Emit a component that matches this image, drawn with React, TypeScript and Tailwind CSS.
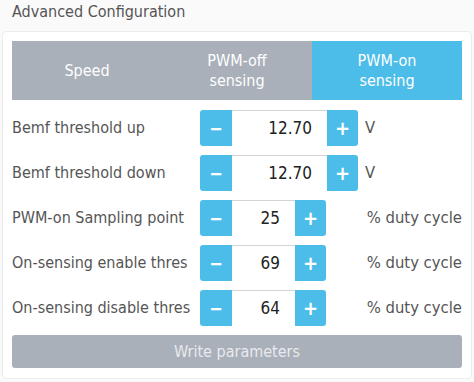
import { useState } from "react";

type Param = {
  label: string;
  value: string;
  unit: string;
  wide: boolean;
};

const params: Param[] = [
  { label: "Bemf threshold up", value: "12.70", unit: "V", wide: true },
  { label: "Bemf threshold down", value: "12.70", unit: "V", wide: true },
  { label: "PWM-on Sampling point", value: "25", unit: "% duty cycle", wide: false },
  { label: "On-sensing enable thres", value: "69", unit: "% duty cycle", wide: false },
  { label: "On-sensing disable thres", value: "64", unit: "% duty cycle", wide: false },
];

const tabs = [
  { id: "speed", label: ["Speed"] },
  { id: "off", label: ["PWM-off", "sensing"] },
  { id: "on", label: ["PWM-on", "sensing"] },
];

function Stepper({ value, wide }: { value: string; wide: boolean }) {
  return (
    <div className="flex h-[36px] overflow-hidden rounded-[3px]">
      <button className="flex w-[32px] items-center justify-center bg-[#4cbde9] text-[18px] font-bold text-white">
        −
      </button>
      <div
        className={`flex items-center justify-end border-t border-[#d4d4d4] bg-white pr-[15px] text-[17px] text-[#222] ${
          wide ? "w-[95px]" : "w-[63px]"
        }`}
      >
        {value}
      </div>
      <button className="flex w-[31px] items-center justify-center bg-[#4cbde9] text-[20px] font-bold text-white">
        +
      </button>
    </div>
  );
}

export default function App() {
  const [active, setActive] = useState("on");

  return (
    <div
      className="min-h-[382px] w-[474px] bg-[#fafafa] text-[#555]"
      style={{ fontFamily: '"DejaVu Sans Condensed", "DejaVu Sans", sans-serif' }}
    >
      <h2 className="px-[12px] pt-0 text-[16px] leading-[24px] text-[#555]">
        Advanced Configuration
      </h2>
      <div className="mx-[2px] mt-[7px] rounded-[4px] border border-[#ececec] bg-white px-[9px] pt-[9px] pb-[10px]">
        <div className="grid h-[59px] grid-cols-3">
          {tabs.map((tab) => (
            <button
              key={tab.id}
              onClick={() => setActive(tab.id)}
              className={`flex flex-col items-center justify-center text-[16px] leading-[20px] text-white ${
                active === tab.id ? "bg-[#4cbde9]" : "bg-[#a9b0ba]"
              }`}
            >
              {tab.label.map((line) => (
                <span key={line}>{line}</span>
              ))}
            </button>
          ))}
        </div>

        <div className="mt-[10px] flex flex-col gap-[9px]">
          {params.map((p) => (
            <div key={p.label} className="flex items-center">
              <span className="w-[188px] text-[16px]">{p.label}</span>
              <Stepper value={p.value} wide={p.wide} />
              <span
                className={`text-[16.5px] ${p.wide ? "ml-[7px]" : "ml-auto"}`}
              >
                {p.unit}
              </span>
            </div>
          ))}
        </div>

        <button className="mt-[9px] h-[33px] w-full rounded-[3px] bg-[#a9b0ba] text-[16px] text-[#e8eaed]">
          Write parameters
        </button>
      </div>
    </div>
  );
}
